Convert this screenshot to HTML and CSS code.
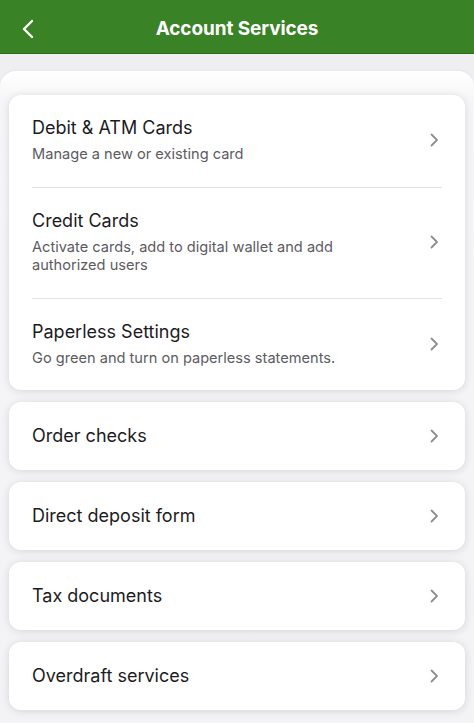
FILE: index.html
```html
<!DOCTYPE html>
<html lang="en">
<head>
<meta charset="utf-8">
<title>Account Services</title>
<link rel="stylesheet" href="styles.css">
</head>
<body>
<header class="topbar">
  <button class="back" aria-label="Back">
    <svg width="14" height="20" viewBox="0 0 14 20"><path d="M11 2 L3 10 L11 18" fill="none" stroke="#fff" stroke-width="2.4" stroke-linecap="round" stroke-linejoin="round"/></svg>
  </button>
  <h1 class="title">Account Services</h1>
</header>
<main class="sheet">
  <section class="card">
    <a class="row">
      <div class="text">
        <div class="row-title">Debit &amp; ATM Cards</div>
        <div class="row-sub">Manage a new or existing card</div>
      </div>
      <svg class="chev" width="10" height="16" viewBox="0 0 10 16"><path d="M2.5 2.5 L8 8 L2.5 13.5" fill="none" stroke="#8e8e93" stroke-width="1.8" stroke-linecap="round" stroke-linejoin="round"/></svg>
    </a>
    <a class="row">
      <div class="text">
        <div class="row-title">Credit Cards</div>
        <div class="row-sub">Activate cards, add to digital wallet and add authorized users</div>
      </div>
      <svg class="chev" width="10" height="16" viewBox="0 0 10 16"><path d="M2.5 2.5 L8 8 L2.5 13.5" fill="none" stroke="#8e8e93" stroke-width="1.8" stroke-linecap="round" stroke-linejoin="round"/></svg>
    </a>
    <a class="row">
      <div class="text">
        <div class="row-title">Paperless Settings</div>
        <div class="row-sub">Go green and turn on paperless statements.</div>
      </div>
      <svg class="chev" width="10" height="16" viewBox="0 0 10 16"><path d="M2.5 2.5 L8 8 L2.5 13.5" fill="none" stroke="#8e8e93" stroke-width="1.8" stroke-linecap="round" stroke-linejoin="round"/></svg>
    </a>
  </section>
  <section class="card single">
    <a class="row"><div class="text"><div class="row-title">Order checks</div></div>
      <svg class="chev" width="10" height="16" viewBox="0 0 10 16"><path d="M2.5 2.5 L8 8 L2.5 13.5" fill="none" stroke="#8e8e93" stroke-width="1.8" stroke-linecap="round" stroke-linejoin="round"/></svg></a>
  </section>
  <section class="card single">
    <a class="row"><div class="text"><div class="row-title">Direct deposit form</div></div>
      <svg class="chev" width="10" height="16" viewBox="0 0 10 16"><path d="M2.5 2.5 L8 8 L2.5 13.5" fill="none" stroke="#8e8e93" stroke-width="1.8" stroke-linecap="round" stroke-linejoin="round"/></svg></a>
  </section>
  <section class="card single">
    <a class="row"><div class="text"><div class="row-title">Tax documents</div></div>
      <svg class="chev" width="10" height="16" viewBox="0 0 10 16"><path d="M2.5 2.5 L8 8 L2.5 13.5" fill="none" stroke="#8e8e93" stroke-width="1.8" stroke-linecap="round" stroke-linejoin="round"/></svg></a>
  </section>
  <section class="card single">
    <a class="row"><div class="text"><div class="row-title">Overdraft services</div></div>
      <svg class="chev" width="10" height="16" viewBox="0 0 10 16"><path d="M2.5 2.5 L8 8 L2.5 13.5" fill="none" stroke="#8e8e93" stroke-width="1.8" stroke-linecap="round" stroke-linejoin="round"/></svg></a>
  </section>
</main>
</body>
</html>
```
FILE: styles.css
```css
* { box-sizing: border-box; }
html, body {
  margin: 0;
  padding: 0;
  height: 100%;
  overflow: hidden;
}
body {
  background: #efeff2;
  font-family: Inter, "Noto Sans", "Liberation Sans", sans-serif;
  color: #1c1c1e;
}
.topbar {
  height: 54px;
  background: #3a8226;
  display: flex;
  align-items: center;
  justify-content: center;
  position: relative;
  border-bottom: 1px solid #2f6e1e;
}
.back {
  position: absolute;
  left: 18px;
  top: 18px;
  background: none;
  border: 0;
  padding: 0;
  width: 20px;
  height: 22px;
  display: flex;
  align-items: center;
  justify-content: center;
}
.title {
  margin: 0;
  color: #fff;
  font-size: 19px;
  font-weight: 700;
  letter-spacing: -0.1px;
  padding-top: 4px;
}
.sheet {
  margin-top: 17px;
  background: linear-gradient(#ffffff 0, #f6f6f8 30px, #f3f3f6 100%);
  border-radius: 16px 16px 0 0;
  padding: 24px 9px 20px;
  display: flex;
  flex-direction: column;
  gap: 12px;
  min-height: 700px;
  box-shadow: 0 -1px 3px rgba(0,0,0,0.04);
}
.card {
  background: #fff;
  border-radius: 12px;
  box-shadow: 0 1px 8px rgba(0,0,0,0.13);
  padding: 0 23px;
}
.row {
  display: flex;
  align-items: center;
  padding: 22px 0 23px;
  border-bottom: 1px solid #e2e2e5;
}
.row:last-child { border-bottom: 0; padding-bottom: 23px; }
.card.single .row {
  padding: 23px 0;
}
.text {
  flex: 1;
  min-width: 0;
  padding-right: 60px;
}
.row-title {
  font-size: 18px;
  line-height: 22px;
  color: #1c1c1e;
  letter-spacing: 0;
}
.row-sub {
  margin-top: 6px;
  font-size: 14.6px;
  line-height: 18.5px;
  color: #5c5c61;
}
.chev {
  flex: none;
  margin-right: 3px;
}
```
